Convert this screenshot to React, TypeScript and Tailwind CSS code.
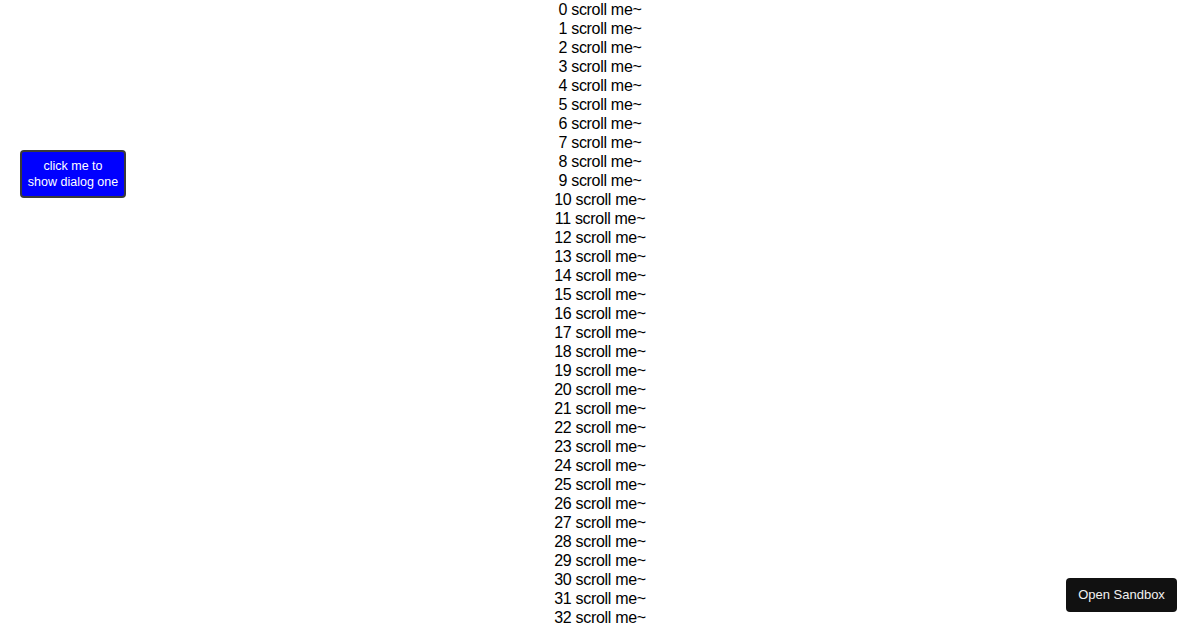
import React from "react";

const ROWS = Array.from({ length: 33 }, (_, i) => i);

export default function App() {
  return (
    <div className="bg-white text-black" style={{ fontFamily: "'Liberation Sans', Arial, sans-serif" }}>
      <div className="flex flex-col items-center text-base leading-[19px] tracking-[-0.3px]">
        {ROWS.map((i) => (
          <div key={i}>{i} scroll me~</div>
        ))}
      </div>

      <button
        type="button"
        className="fixed left-[20px] top-[150px] w-[106px] h-[48px] bg-[#0000ff] text-white text-[12.5px] leading-4 border-2 border-[#3a3a3a] rounded-[4px] px-0"
      >
        click me to
        <br />
        show dialog one
      </button>

      <button
        type="button"
        className="fixed right-[23px] bottom-[18px] w-[111px] h-[34px] bg-[#111111] text-[#f2f2f2] text-[13px] rounded-[4px]"
      >
        Open Sandbox
      </button>
    </div>
  );
}
